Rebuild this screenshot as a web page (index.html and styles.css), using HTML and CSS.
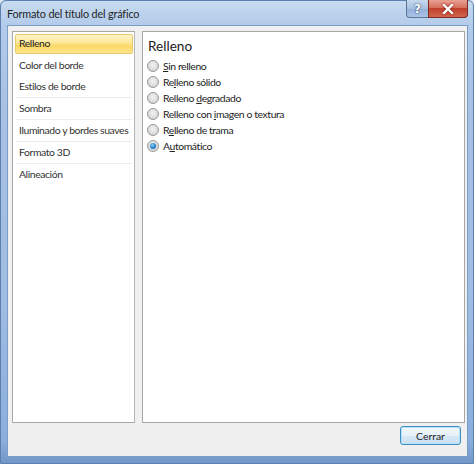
FILE: index.html
```html
<!DOCTYPE html>
<html lang="es">
<head>
<meta charset="utf-8">
<title>Formato del título del gráfico</title>
<link rel="stylesheet" href="styles.css">
</head>
<body>
<div class="window">
  <div class="titlebar">
    <span class="title">Formato del título del gráfico</span>
    <div class="caption-buttons">
      <div class="cbtn help">?</div>
      <div class="cbtn close">
        <svg width="12" height="10" viewBox="0 0 12 10"><path d="M2 1 L10 9 M10 1 L2 9" stroke="#fff" stroke-width="2.4" stroke-linecap="square" fill="none"/></svg>
      </div>
    </div>
  </div>
  <div class="client">
    <div class="panes">
      <div class="nav">
        <div class="nav-item selected">Relleno</div>
        <div class="nav-item">Color del borde</div>
        <div class="nav-item">Estilos de borde</div>
        <div class="sep"></div>
        <div class="nav-item">Sombra</div>
        <div class="sep"></div>
        <div class="nav-item">Iluminado y bordes suaves</div>
        <div class="sep"></div>
        <div class="nav-item">Formato 3D</div>
        <div class="sep"></div>
        <div class="nav-item">Alineación</div>
      </div>
      <div class="content">
        <div class="heading">Relleno</div>
        <div class="options">
          <div class="opt"><span class="radio"></span><span><u>S</u>in relleno</span></div>
          <div class="opt"><span class="radio"></span><span>Re<u>l</u>leno sólido</span></div>
          <div class="opt"><span class="radio"></span><span>Relleno <u>d</u>egradado</span></div>
          <div class="opt"><span class="radio"></span><span>Relleno con <u>i</u>magen o textura</span></div>
          <div class="opt"><span class="radio"></span><span>R<u>e</u>lleno de trama</span></div>
          <div class="opt"><span class="radio checked"></span><span>A<u>u</u>tomático</span></div>
        </div>
      </div>
    </div>
    <div class="footer">
      <div class="button">Cerrar</div>
    </div>
  </div>
</div>
</body>
</html>
```
FILE: styles.css
```css
* { box-sizing: border-box; }
html, body { margin: 0; padding: 0; }
body {
  width: 474px;
  height: 464px;
  overflow: hidden;
  font-family: "Lato", "Open Sans", "DejaVu Sans", sans-serif;
  background: #dbe6f3;
}
.window {
  width: 474px;
  height: 464px;
  display: flex;
  flex-direction: column;
  background: linear-gradient(180deg, #c8dbf0 0px, #b3cbea 24px, #a8c2e4 100px, #9fbce2 300px, #8aaedc 440px, #6f95c8 464px);
  border: 1px solid #5b7fae;
  border-radius: 6px 6px 0 0;
  position: relative;
}
.titlebar {
  height: 24px;
  flex: none;
  display: flex;
  align-items: center;
  padding-left: 6px;
  position: relative;
}
.title {
  font-size: 10.8px;
  letter-spacing: -0.15px;
  color: #1e1e1e;
  white-space: nowrap;
  padding-top: 1px;
}
.caption-buttons {
  position: absolute;
  top: -1px;
  right: 5px;
  display: flex;
  height: 18px;
}
.cbtn {
  height: 18px;
  border: 1px solid #5f7594;
  border-top: none;
  display: flex;
  align-items: center;
  justify-content: center;
}
.help {
  width: 22px;
  border-radius: 0 0 0 4px;
  border-right: none;
  background: linear-gradient(180deg, #c6d8ee 0%, #a9c1e0 50%, #93afd6 51%, #a8c4e6 100%);
  color: #fff;
  font-family: "DejaVu Sans", sans-serif;
  font-weight: bold;
  font-size: 12px;
  text-shadow: 0 0 2px #2b4a78, 0 0 1px #2b4a78;
}
.close {
  width: 40px;
  border-radius: 0 0 4px 0;
  border-color: #7a2a22;
  background: linear-gradient(180deg, #e8a093 0%, #d7705f 45%, #c0402c 50%, #d3664f 100%);
}
.close svg { filter: drop-shadow(0 0 1px #6b1a10); }
.client {
  flex: 1;
  margin: 0 5px 6px 6px;
  background: #f0f0f0;
  border: 1px solid #7d9cc6;
  display: flex;
  flex-direction: column;
  padding: 5px 2px 5px 4px;
}
.panes {
  flex: 1;
  display: flex;
  gap: 7px;
}
.nav {
  width: 123px;
  background: #fff;
  border: 1px solid #a7a7a7;
  border-right-color: #b5b5b5;
  padding: 2px 1px 0 2px;
  display: flex;
  flex-direction: column;
}
.nav-item {
  height: 21px;
  line-height: 20px;
  font-size: 10.4px;
  letter-spacing: -0.4px;
  color: #333;
  padding-left: 4px;
  white-space: nowrap;
}
.nav-item.selected {
  height: 20px;
  margin-bottom: 1px;
  background: linear-gradient(180deg, #fff4c4 0%, #fde9a0 40%, #fcd966 60%, #fde48c 100%);
  border: 1px solid #e6c96d;
  border-radius: 2px;
  padding-left: 3px;
  line-height: 17px;
  color: #222;
}
.sep {
  height: 1px;
  margin: 0 1px;
  background: #ececec;
}
.content {
  flex: 1;
  background: #fff;
  border: 1px solid #a7a7a7;
  padding: 4px 0 0 5px;
}
.heading {
  font-size: 13.6px;
  color: #1a1a1a;
  line-height: 20px;
  margin-bottom: 2px;
}
.options {
  display: flex;
  flex-direction: column;
}
.opt {
  height: 16px;
  display: flex;
  align-items: center;
  gap: 4px;
  font-size: 10.4px;
  letter-spacing: -0.4px;
  color: #222;
  white-space: nowrap;
}
.opt u { text-decoration-thickness: 1px; text-underline-offset: 1px; }
.radio {
  width: 12px;
  height: 12px;
  margin-left: -1px;
  border-radius: 50%;
  border: 1px solid #9a9a9a;
  background: radial-gradient(circle at 50% 40%, #f2f2f2 0%, #dcdcdc 55%, #c8c8c8 100%);
  flex: none;
  position: relative;
}
.radio.checked::after {
  content: "";
  position: absolute;
  left: 2px;
  top: 2px;
  width: 6px;
  height: 6px;
  border-radius: 50%;
  background: radial-gradient(circle at 40% 35%, #8fd2f5 0%, #2a8ad0 50%, #114d86 100%);
}
.footer {
  height: 28px;
  flex: none;
  display: flex;
  justify-content: flex-end;
  align-items: flex-start;
  padding-top: 3px;
  padding-right: 4px;
}
.button {
  width: 61px;
  height: 19px;
  border: 1px solid #3c8fc2;
  border-radius: 3px;
  background: linear-gradient(180deg, #f4f9fd 0%, #e7f1fa 50%, #d6e7f5 51%, #cde2f3 100%);
  box-shadow: inset 0 0 0 1px #b8e0f6;
  font-size: 10.4px;
  color: #222;
  display: flex;
  align-items: center;
  justify-content: center;
}
```
